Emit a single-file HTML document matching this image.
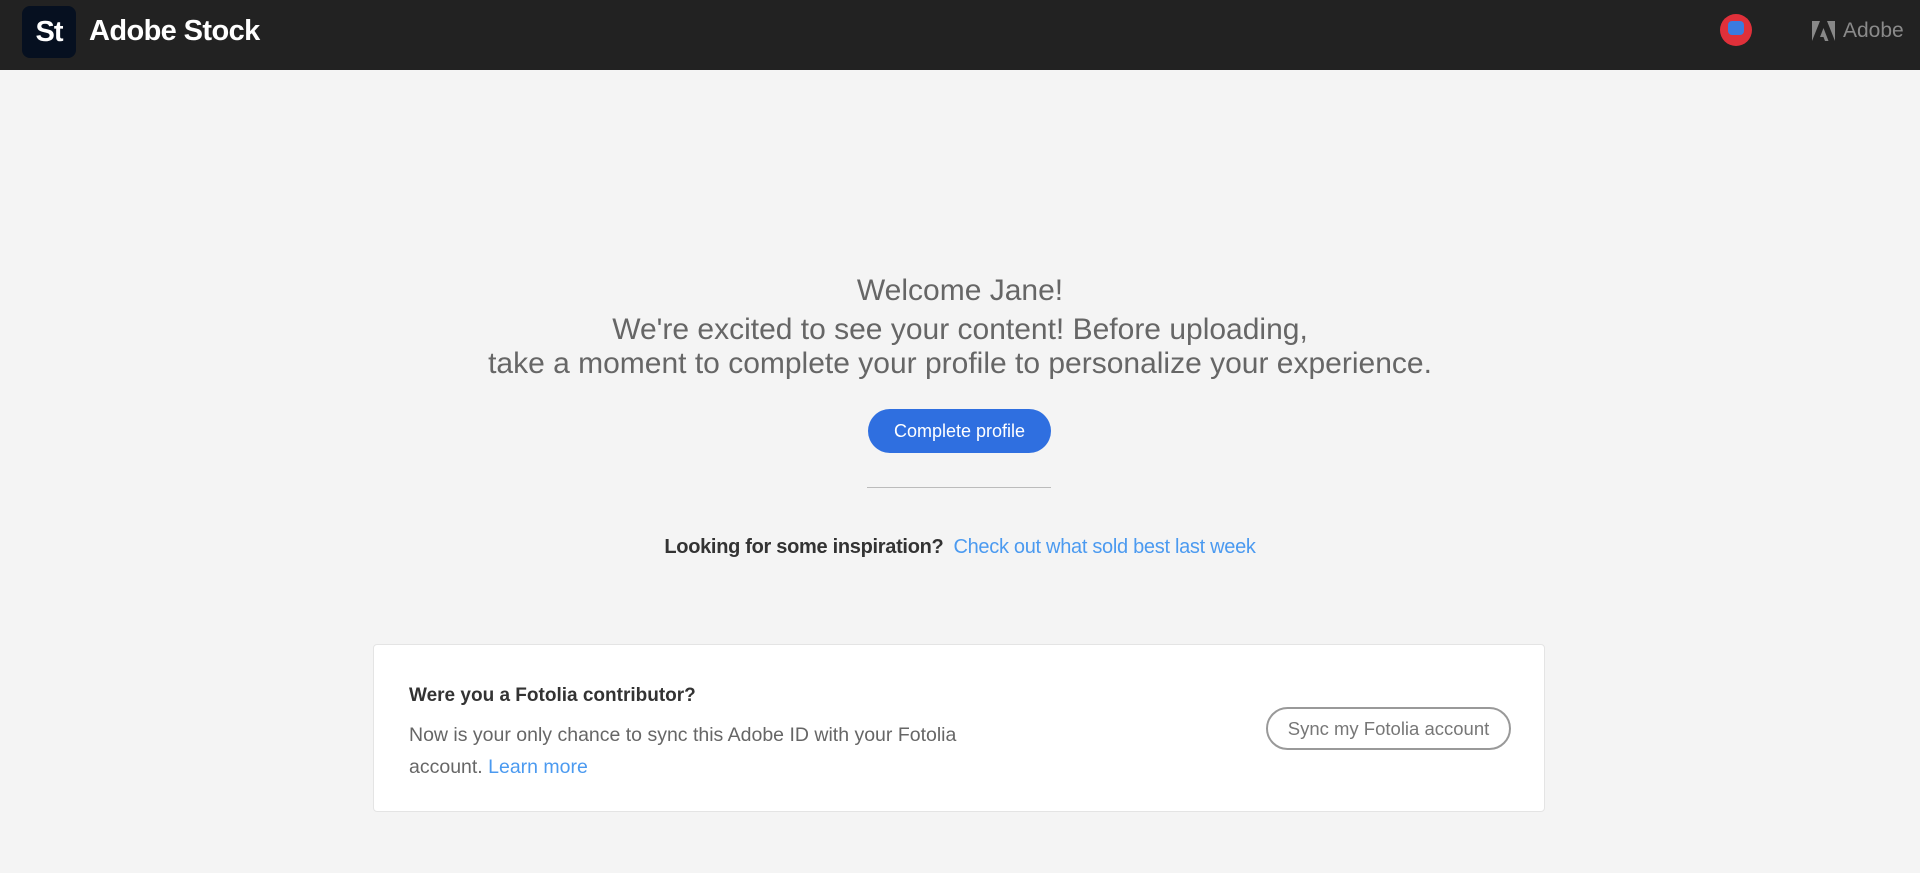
<!DOCTYPE html>
<html><head><meta charset="utf-8"><style>
*{margin:0;padding:0;box-sizing:border-box}
body{width:1920px;height:873px;background:#f4f4f4;font-family:"Liberation Sans",sans-serif;position:relative;overflow:hidden}
.hdr{position:absolute;left:0;top:0;width:1920px;height:70px;background:#222}
.logo{position:absolute;left:22px;top:6px;width:54px;height:52px;background:#061020;border-radius:8px;color:#fff;font-weight:bold;font-size:29px;text-align:center;line-height:52px;letter-spacing:-1px}
.brand{position:absolute;left:89px;top:15px;color:#fff;font-weight:bold;font-size:29px;letter-spacing:-0.6px}
.av{position:absolute;left:1720px;top:14px;width:32px;height:32px;border-radius:50%;background:#e0303a}
.av i{position:absolute;left:8px;top:7px;width:16px;height:14px;background:#3a7be0;border-radius:4px}
.adobe{position:absolute;left:1843px;top:19px;color:#8a8a8a;font-size:21px}
.c{position:absolute;left:0;width:1920px;text-align:center;color:#666;font-size:30px}
.btn{position:absolute;left:868px;top:409px;width:183px;height:44px;border-radius:22px;background:#2f6fe0;color:#fff;font-size:18px;text-align:center;line-height:44px}
.hr{position:absolute;left:867px;top:487px;width:184px;height:1px;background:#bbb}
.insp{position:absolute;left:0;width:1920px;top:536px;text-align:center;font-size:20px;letter-spacing:-0.3px}
.insp b{color:#333}.insp a{color:#4b9af0;margin-left:10px}
.card{position:absolute;left:373px;top:644px;width:1172px;height:168px;background:#fff;border:1px solid #e4e4e4;border-radius:4px}
.t{position:absolute;left:35px;top:40px;font-weight:bold;color:#333;font-size:19px}
.p{position:absolute;left:35px;top:74px;width:620px;color:#666;font-size:19.5px;line-height:32px}
.p a{color:#4b9af0}
.sync{position:absolute;left:892px;top:62px;width:245px;height:43px;border:2px solid #999;border-radius:22px;color:#777;font-size:18.5px;text-align:center;line-height:39px}
</style></head><body>
<div class="hdr">
<div class="logo">St</div><div class="brand">Adobe Stock</div>
<div class="av"><i></i></div>
<svg style="position:absolute;left:1812px;top:21px" width="23" height="20" viewBox="0 0 23 20"><path d="M0 0h8L0 20zM15 0h8v20zM11.5 7l5 13h-3.5l-1.5-4H8z" fill="#888"/></svg>
<div class="adobe">Adobe</div>
</div>
<div class="c" style="top:274px">Welcome Jane!</div>
<div class="c" style="top:313px">We're excited to see your content! Before uploading,</div>
<div class="c" style="top:347px">take a moment to complete your profile to personalize your experience.</div>
<div class="btn">Complete profile</div>
<div class="hr"></div>
<div class="insp"><b>Looking for some inspiration?</b><a>Check out what sold best last week</a></div>
<div class="card">
<div class="t">Were you a Fotolia contributor?</div>
<div class="p">Now is your only chance to sync this Adobe ID with your Fotolia<br>account. <a>Learn more</a></div>
<div class="sync">Sync my Fotolia account</div>
</div>
</body></html>
